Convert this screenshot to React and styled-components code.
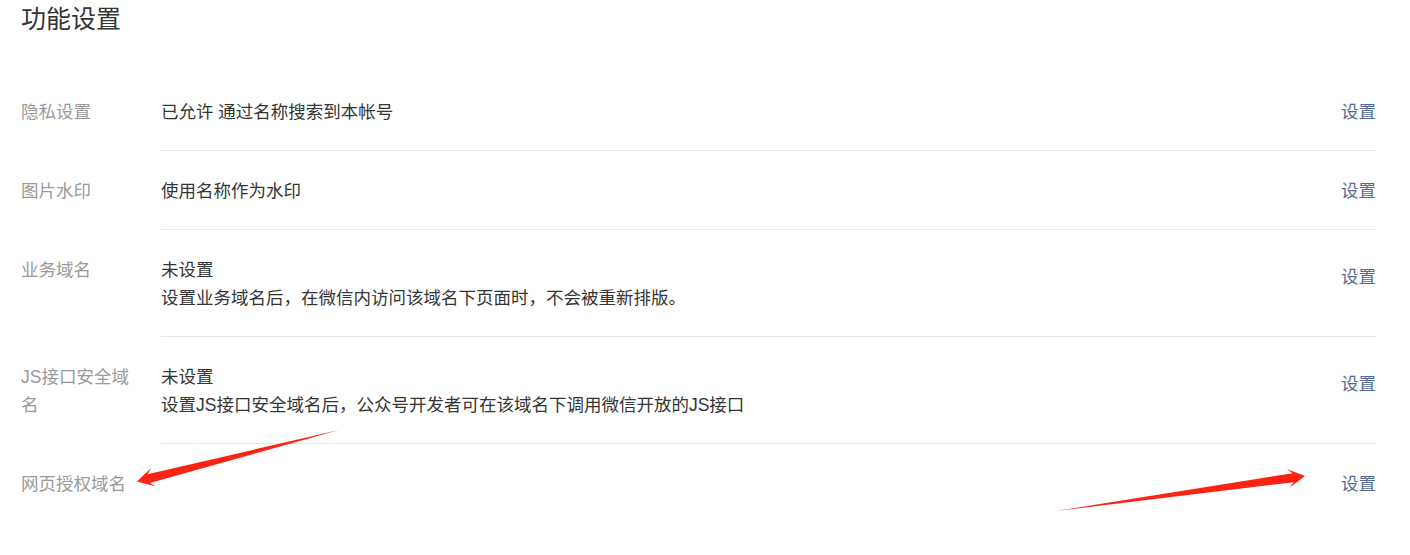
import styled, { createGlobalStyle } from "styled-components";

const GlobalStyle = createGlobalStyle`
  html, body {
    margin: 0;
    padding: 0;
    background: #fff;
  }
  body {
    font-family: "Liberation Sans", "Noto Sans CJK SC", sans-serif;
    color: #353535;
  }
`;

const rows = [
  { label: "隐私设置", lines: ["已允许 通过名称搜索到本帐号"] },
  { label: "图片水印", lines: ["使用名称作为水印"] },
  {
    label: "业务域名",
    lines: ["未设置", "设置业务域名后，在微信内访问该域名下页面时，不会被重新排版。"],
  },
  {
    label: "JS接口安全域名",
    lines: ["未设置", "设置JS接口安全域名后，公众号开发者可在该域名下调用微信开放的JS接口"],
  },
  { label: "网页授权域名", lines: [] },
];

// annotation arrows drawn on top of the screenshot
const arrows = [
  { from: [339, 430], to: [137, 481.5] },
  { from: [1056, 511], to: [1305, 476] },
];

const arrowPoints = ({ from, to }) => {
  const dx = to[0] - from[0];
  const dy = to[1] - from[1];
  const len = Math.hypot(dx, dy);
  const ux = dx / len;
  const uy = dy / len;
  const nx = -uy;
  const ny = ux;
  const at = (back, side) => [
    to[0] - ux * back + nx * side,
    to[1] - uy * back + ny * side,
  ];
  const pts = [
    from,
    at(12, 4.5),
    at(17, 9.5),
    to,
    at(17, -9.5),
    at(12, -4.5),
  ];
  return pts.map((p) => p.join(",")).join(" ");
};

export default function App() {
  return (
    <Page>
      <GlobalStyle />
      <Title>功能设置</Title>
      <List>
        {rows.map((row, i) => (
          <Row key={row.label}>
            <Label>{row.label}</Label>
            <Body $last={i === rows.length - 1}>
              <Content>
                {row.lines.map((line) => (
                  <Line key={line}>{line}</Line>
                ))}
              </Content>
              <Action $multi={row.lines.length > 1}>设置</Action>
            </Body>
          </Row>
        ))}
      </List>
      <Overlay width="1410" height="555" viewBox="0 0 1410 555">
        {arrows.map((a, i) => (
          <polygon key={i} points={arrowPoints(a)} fill="#fa2314" />
        ))}
      </Overlay>
    </Page>
  );
}

const Page = styled.div`
  position: relative;
  width: 1410px;
  height: 555px;
  box-sizing: border-box;
  padding: 0 34px 0 21px;
  overflow: hidden;
`;

const Title = styled.h2`
  margin: 0 0 34px;
  font-size: 25px;
  font-weight: 400;
  line-height: 38px;
  color: #353535;
`;

const List = styled.div`
  display: flex;
  flex-direction: column;
`;

const Row = styled.div`
  display: flex;
  font-size: 17.5px;
  line-height: 28px;
`;

const Label = styled.div`
  width: 140px;
  flex-shrink: 0;
  box-sizing: border-box;
  padding: 26px 24px 24px 0;
  color: #9a9a9a;
`;

const Body = styled.div`
  flex: 1;
  display: flex;
  align-items: center;
  justify-content: space-between;
  padding: 26px 0 24px;
  border-bottom: ${(p) => (p.$last ? "none" : "1px solid #e7e7eb")};
`;

const Content = styled.div`
  display: flex;
  flex-direction: column;
  color: #353535;
`;

const Line = styled.div`
  white-space: nowrap;
`;

const Action = styled.a`
  color: #576b95;
  cursor: pointer;
  white-space: nowrap;
  margin-bottom: ${(p) => (p.$multi ? "14px" : "0")};
`;

const Overlay = styled.svg`
  position: absolute;
  left: 0;
  top: 0;
  pointer-events: none;
`;
